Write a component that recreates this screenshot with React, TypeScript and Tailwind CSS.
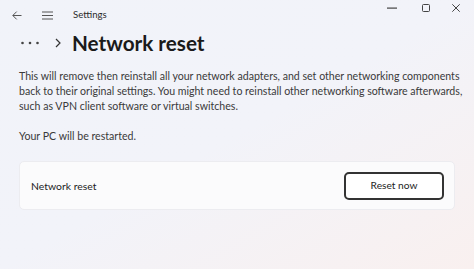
export default function App() {
  return (
    <div
      className="relative w-[474px] h-[269px] overflow-hidden bg-gradient-to-br from-[#f1f3f9] via-[#f2f3f9] to-[#f9f0ef] text-[#1b1b1b]"
      style={{ fontFamily: 'Lato, "Noto Sans", sans-serif' }}
    >
      {/* Title bar */}
      <div className="flex items-center h-[30px]">
        <button className="ml-[11px] w-[12px] h-[12px] flex items-center justify-center text-[#555]">
          <svg width="10" height="9" viewBox="0 0 10 9" fill="none" stroke="currentColor" strokeWidth="1">
            <path d="M9.5 4.5H1M4.7 0.6L0.8 4.5 4.7 8.4" />
          </svg>
        </button>
        <button className="ml-[18px] w-[12px] h-[12px] flex items-center justify-center text-[#555]">
          <svg width="11" height="9" viewBox="0 0 11 9" fill="none" stroke="currentColor" strokeWidth="1">
            <path d="M0 1h11M0 4.5h11M0 8h11" />
          </svg>
        </button>
        <span className="ml-[20px] text-[9.6px] text-[#2a2a2a]">Settings</span>

        {/* Window controls */}
        <div className="ml-auto self-start mt-[3px] mr-[5px] flex items-center h-[10px]">
          <div className="w-[34px] h-[10px] flex items-center justify-center">
            <svg width="10" height="10" viewBox="0 0 10 10">
              <rect x="0" y="4.5" width="10" height="1.2" fill="#444" />
            </svg>
          </div>
          <div className="w-[34px] h-[10px] flex items-center justify-center text-[#444]">
            <svg width="8" height="8" viewBox="0 0 8 8" fill="none" stroke="currentColor" strokeWidth="1">
              <rect x="0.5" y="0.5" width="7" height="7" rx="1" />
            </svg>
          </div>
          <div className="w-[26px] h-[10px] flex items-center justify-center text-[#444]">
            <svg width="8" height="8" viewBox="0 0 8 8" fill="none" stroke="currentColor" strokeWidth="1">
              <path d="M0.3 0.3l7.4 7.4M7.7 0.3l-7.4 7.4" />
            </svg>
          </div>
        </div>
      </div>

      {/* Breadcrumb header */}
      <div className="flex items-center h-[28px] mt-[-1px]">
        <svg className="ml-[21px] text-[#444]" width="18" height="4" viewBox="0 0 18 4" fill="currentColor">
          <circle cx="1.5" cy="2" r="1.3" />
          <circle cx="9" cy="2" r="1.3" />
          <circle cx="16.5" cy="2" r="1.3" />
        </svg>
        <svg className="ml-[16px] text-[#333]" width="6" height="10" viewBox="0 0 6 10" fill="none" stroke="currentColor" strokeWidth="1.2">
          <path d="M1 1l4 4-4 4" />
        </svg>
        <h1 className="ml-[11px] text-[20.7px] font-bold leading-none text-[#1a1a1a]">Network reset</h1>
      </div>

      {/* Description */}
      <div className="px-[19px] mt-[12px] text-[10.6px] leading-[15px] text-[#3a3a3a] whitespace-nowrap">
        <p>
          This will remove then reinstall all your network adapters, and set other networking components
          <br />
          back to their original settings. You might need to reinstall other networking software afterwards,
          <br />
          such as VPN client software or virtual switches.
        </p>
        <p className="mt-[15px]">Your PC will be restarted.</p>
      </div>

      {/* Card */}
      <div className="mx-[19px] mt-[17px] h-[49px] rounded-[5px] bg-[#fbfbfc] border border-[#ececf0] flex items-center justify-between pl-[11px] pr-[10px]">
        <span className="text-[10.4px] text-[#222] mt-[2px]">Network reset</span>
        <button className="w-[100px] h-[28px] rounded-[5px] border-2 border-[#333] bg-white text-[10.2px] text-[#222]">
          Reset now
        </button>
      </div>
    </div>
  );
}
